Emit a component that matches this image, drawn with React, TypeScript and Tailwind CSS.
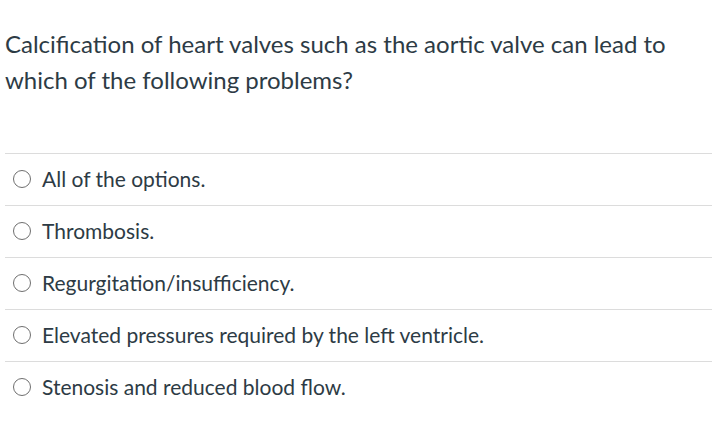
const options = [
  "All of the options.",
  "Thrombosis.",
  "Regurgitation/insufficiency.",
  "Elevated pressures required by the left ventricle.",
  "Stenosis and reduced blood flow.",
];

export default function App() {
  return (
    <div className="min-h-screen bg-white pl-[5px] pr-[2px] pt-[26px] text-[#2d3b45] font-['Lato',sans-serif]">
      <p className="text-[24px] leading-[36px]">
        Calcification of heart valves such as the aortic valve can lead to which of the following problems?
      </p>
      <div className="mt-[55px]">
        {options.map((o) => (
          <label key={o} className="flex h-[52px] items-center pb-[1px] border-t border-[#dcdcdc] text-[21px]">
            <span className="ml-[8px] mr-[11px] h-[18px] w-[18px] rounded-full border-[1.5px] border-[#6f6f6f]" />
            {o}
          </label>
        ))}
      </div>
    </div>
  );
}
